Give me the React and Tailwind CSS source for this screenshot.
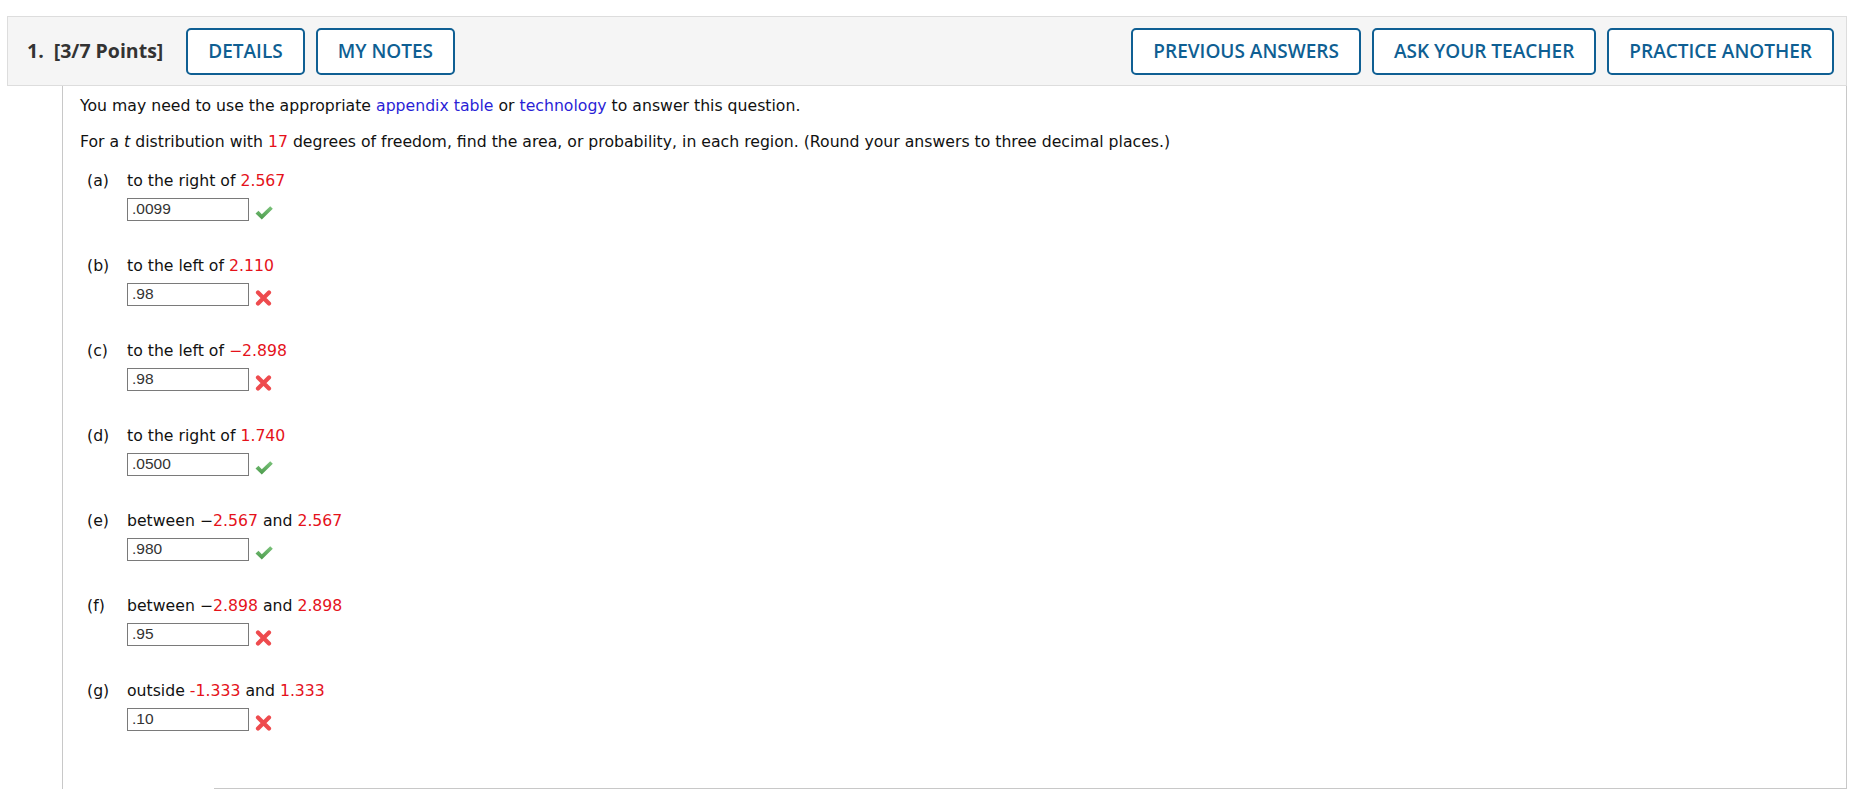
import React from 'react';

const verdana = { fontFamily: '"DejaVu Sans", Verdana, sans-serif' };

const Check = () => (
  <svg width="20" height="16" viewBox="0 0 20 16" className="ml-[5px] mt-[7px]">
    <defs>
      <linearGradient id="cg" x1="0" y1="0" x2="0" y2="1">
        <stop offset="0" stopColor="#7cc47c" />
        <stop offset="1" stopColor="#4b9a4b" />
      </linearGradient>
    </defs>
    <path d="M1.5 8.5 L4.5 5.8 L7.8 9.2 L16.2 1.2 L18.8 3.8 L7.8 14.5 Z" fill="url(#cg)" />
  </svg>
);

const Cross = () => (
  <svg width="17" height="16" viewBox="0 0 17 16" className="ml-[6px] mt-[7px]">
    <path d="M3 2.5 L14 13.5 M14 2.5 L3 13.5" stroke="#ee4b4e" strokeWidth="4.2" strokeLinecap="round" />
  </svg>
);

const Num = ({ children }) => <span className="text-[#e5121b]">{children}</span>;

const parts = [
  { key: 'a', label: <>to the right of <Num>2.567</Num></>, value: '.0099', ok: true },
  { key: 'b', label: <>to the left of <Num>2.110</Num></>, value: '.98', ok: false },
  { key: 'c', label: <>to the left of <Num>{'\u22122.898'}</Num></>, value: '.98', ok: false },
  { key: 'd', label: <>to the right of <Num>1.740</Num></>, value: '.0500', ok: true },
  { key: 'e', label: <>between {'\u2212'}<Num>2.567</Num> and <Num>2.567</Num></>, value: '.980', ok: true },
  { key: 'f', label: <>between {'\u2212'}<Num>2.898</Num> and <Num>2.898</Num></>, value: '.95', ok: false },
  { key: 'g', label: <>outside <Num>-1.333</Num> and <Num>1.333</Num></>, value: '.10', ok: false },
];

const HeaderButton = ({ children }) => (
  <button
    className="h-[47px] px-[20px] border-2 border-[#0f5f93] rounded-[5px] text-[#0f5f93] text-[19px] font-semibold bg-white"
    style={{ fontFamily: '"Open Sans", sans-serif' }}
  >
    {children}
  </button>
);

const Part = ({ part }) => (
  <div className="flex ml-[7px] mb-[35px]">
    <div className="w-[40px] leading-[20px]">({part.key})</div>
    <div>
      <div className="leading-[20px]">{part.label}</div>
      <div className="flex items-start mt-[7px]">
        <div
          className="w-[122px] h-[23px] border border-[#7a7a7a] pl-[4px] leading-[20px] text-[15.5px] text-[#333]"
          style={{ fontFamily: '"Liberation Sans", Arial, sans-serif' }}
        >
          {part.value}
        </div>
        {part.ok ? <Check /> : <Cross />}
      </div>
    </div>
  </div>
);

export default function App() {
  return (
    <div className="h-[790px] bg-white overflow-hidden">
      <div className="pt-4 pl-[7px] w-[1847px]">
        <div className="h-[70px] flex items-center justify-between border border-[#dddddd] bg-[#f5f5f5] pl-[19px] pr-[12px]">
          <div className="flex items-center">
            <span
              className="text-[19.5px] font-bold text-[#333] mr-[10px]"
              style={{ fontFamily: '"Open Sans", sans-serif' }}
            >
              1.
            </span>
            <span
              className="text-[19.5px] font-bold text-[#333] mr-[23px]"
              style={{ fontFamily: '"Open Sans", sans-serif' }}
            >
              [3/7 Points]
            </span>
            <div className="flex gap-[11px]">
              <HeaderButton>DETAILS</HeaderButton>
              <HeaderButton>MY NOTES</HeaderButton>
            </div>
          </div>
          <div className="flex gap-[11px]">
            <HeaderButton>PREVIOUS ANSWERS</HeaderButton>
            <HeaderButton>ASK YOUR TEACHER</HeaderButton>
            <HeaderButton>PRACTICE ANOTHER</HeaderButton>
          </div>
        </div>
      </div>
      <div
        className="ml-[62px] w-[1785px] h-[703px] flex flex-col border-l border-r border-[#c8c8c8] pt-[10px] pl-[17px] text-[15.7px] text-[#111]"
        style={verdana}
      >
        <p className="leading-[20px]">
          You may need to use the appropriate{' '}
          <span className="text-[#2a1fd6]">appendix table</span> or{' '}
          <span className="text-[#2a1fd6]">technology</span> to answer this question.
        </p>
        <p className="leading-[20px] mt-[16px] mb-[19px]">
          For a <i>t</i> distribution with <Num>17</Num> degrees of freedom, find the area, or
          probability, in each region. (Round your answers to three decimal places.)
        </p>
        {parts.map((p) => (
          <Part key={p.key} part={p} />
        ))}
        <div className="mt-auto -ml-[17px] pl-[151px]">
          <div className="border-b border-[#c8c8c8]" />
        </div>
      </div>
    </div>
  );
}
